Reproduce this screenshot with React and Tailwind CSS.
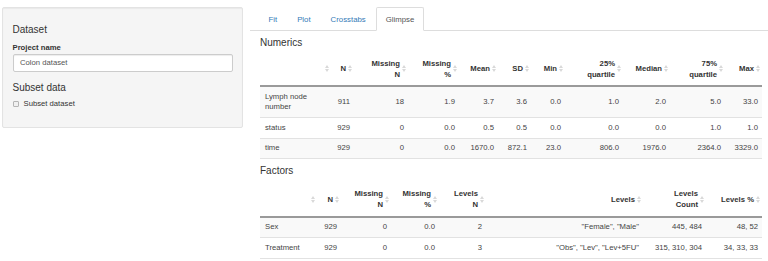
import React from "react";

const SortIcon = () => (
  <svg width="4" height="7" viewBox="0 0 4 7" className="ml-[2px] shrink-0">
    <path d="M0 3 L2 0 L4 3 Z" fill="#d9d9d9" />
    <path d="M0 4 L2 7 L4 4 Z" fill="#d9d9d9" />
  </svg>
);

const numCols = [
  { w: 71, label: "" },
  { w: 23, label: "N" },
  { w: 54, label: ["Missing", "N"] },
  { w: 51, label: ["Missing", "%"] },
  { w: 39, label: "Mean" },
  { w: 33, label: "SD" },
  { w: 34, label: "Min" },
  { w: 58, label: ["25%", "quartile"] },
  { w: 47, label: "Median" },
  { w: 55, label: ["75%", "quartile"] },
  { w: 37, label: "Max" },
];

const numRows = [
  [["Lymph node", "number"], "911", "18", "1.9", "3.7", "3.6", "0.0", "1.0", "2.0", "5.0", "33.0"],
  ["status", "929", "0", "0.0", "0.5", "0.5", "0.0", "0.0", "0.0", "1.0", "1.0"],
  ["time", "929", "0", "0.0", "1670.0", "872.1", "23.0", "806.0", "1976.0", "2364.0", "3329.0"],
];

const facCols = [
  { w: 57, label: "" },
  { w: 24, label: "N" },
  { w: 50, label: ["Missing", "N"] },
  { w: 48, label: ["Missing", "%"] },
  { w: 47, label: ["Levels", "N"] },
  { w: 157, label: "Levels" },
  { w: 63, label: ["Levels", "Count"] },
  { w: 56, label: "Levels %" },
];

const facRows = [
  ["Sex", "929", "0", "0.0", "2", "\"Female\", \"Male\"", "445, 484", "48, 52"],
  ["Treatment", "929", "0", "0.0", "3", "\"Obs\", \"Lev\", \"Lev+5FU\"", "315, 310, 304", "34, 33, 33"],
];

const Lines = ({ v }) =>
  Array.isArray(v) ? (
    <span>
      {v[0]}
      <br />
      {v[1]}
    </span>
  ) : (
    <span>{v}</span>
  );

const DataTable = ({ cols, rows, bottom }) => (
  <table className="table-fixed border-collapse w-[502px]">
    <colgroup>
      {cols.map((c, i) => (
        <col key={i} style={{ width: c.w }} />
      ))}
    </colgroup>
    <thead>
      <tr>
        {cols.map((c, i) => (
          <th key={i} className="py-[5.5px] pr-[2px] pl-0 font-bold leading-[11px] text-right align-middle border-b-2 border-[#9a9a9a] text-[#333]">
            <div className="flex items-center justify-end">
              <Lines v={c.label} />
              <SortIcon />
            </div>
          </th>
        ))}
      </tr>
    </thead>
    <tbody>
      {rows.map((r, ri) => (
        <tr key={ri} className={ri % 2 === 0 ? "bg-[#f9f9f9]" : "bg-white"}>
          {r.map((v, ci) => (
            <td
              key={ci}
              className={`py-[4.5px] leading-[10.5px] align-middle text-[#444] ${ri > 0 ? "border-t border-[#e2e2e2]" : ""} ${ri === rows.length - 1 ? bottom : ""} ${ci === 0 ? "pl-[5px] text-left" : "pr-[4px] text-right"}`}
            >
              <Lines v={v} />
            </td>
          ))}
        </tr>
      ))}
    </tbody>
  </table>
);

export default function App() {
  return (
    <div className="w-[768px] h-[261px] overflow-hidden bg-white flex font-['Liberation_Sans',Arial,sans-serif] text-[7.7px] text-[#333]">
      <div className="w-[250px] shrink-0 pt-[7px]">
        <div className="ml-[1.5px] w-[241px] h-[121px] bg-[#f5f5f5] border border-[#e3e3e3] rounded-[2px] shadow-[inset_0_1px_1px_rgba(0,0,0,0.05)] px-[10px]">
          <div className="pt-[15.5px] text-[10px] leading-[11px]">Dataset</div>
          <div className="mt-[7px] font-bold leading-[11px]">Project name</div>
          <div className="mt-[1.5px] h-[18px] w-[220px] bg-white border border-[#ccc] rounded-[2px] shadow-[inset_0_1px_1px_rgba(0,0,0,0.075)] flex items-center pl-[6.5px] text-[#555]">
            Colon dataset
          </div>
          <div className="mt-[9.5px] text-[10px] leading-[11px]">Subset data</div>
          <div className="mt-[5.5px] flex items-center leading-[11px]">
            <span className="w-[6px] h-[6px] border border-[#b5b5b5] bg-[#f0f0f0] rounded-[1px]" />
            <span className="ml-[5px]">Subset dataset</span>
          </div>
        </div>
      </div>
      <div className="flex-1 min-w-0">
        <ul className="mt-[7px] flex border-b border-[#ddd] pl-[9px] text-[7.8px]">
          {["Fit", "Plot", "Crosstabs", "Glimpse"].map((t) => (
            <li key={t} className="mr-[1px] -mb-px">
              <span
                className={`block px-[8.5px] py-[5.5px] leading-[11px] border rounded-t-[2px] ${
                  t === "Glimpse" ? "border-[#ddd] border-b-white bg-white text-[#555]" : "border-transparent text-[#337ab7]"
                }`}
              >
                {t}
              </span>
            </li>
          ))}
        </ul>
        <div className="pl-[10px]">
          <div className="mt-[5.5px] text-[10px] leading-[11px]">Numerics</div>
          <div className="mt-[4.5px]">
            <DataTable cols={numCols} rows={numRows} bottom="border-b border-[#8a8a8a]" />
          </div>
          <div className="mt-[6px] text-[10px] leading-[11px]">Factors</div>
          <div className="mt-[6.5px]">
            <DataTable cols={facCols} rows={facRows} bottom="border-b border-[#d5d5d5]" />
          </div>
        </div>
      </div>
    </div>
  );
}
